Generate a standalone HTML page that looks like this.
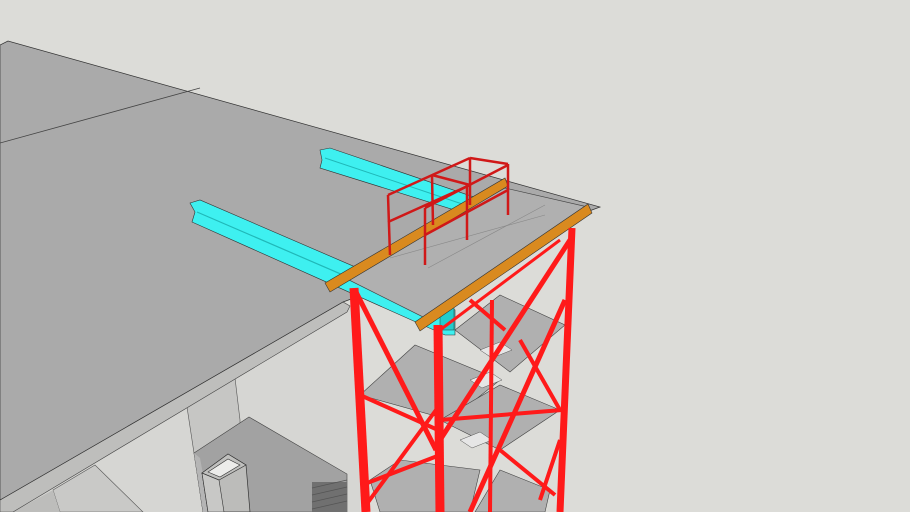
<!DOCTYPE html>
<html><head><meta charset="utf-8"><style>
html,body{margin:0;padding:0;background:#dcdcd8;}
svg{display:block}
</style></head><body>
<svg width="910" height="512" viewBox="0 0 910 512" xmlns="http://www.w3.org/2000/svg">
<rect width="910" height="512" fill="#dcdcd8"/>
<!-- under-slab area -->
<polygon points="347,310 13,512 360,512 360,300" fill="#d6d6d3"/>
<polygon points="53,490 95,465 143,512 60,512" fill="#c9c9c7" stroke="#555" stroke-width="0.6"/>
<polygon points="13,512 53,490 60,512" fill="#bdbdbb"/>
<!-- column -->
<polygon points="187,407 235,378 240,420 240,512 203,512" fill="#c6c6c4" stroke="#555" stroke-width="0.6"/>
<!-- AC box -->
<polygon points="194,453 249,417 347,474 347,512 203,512" fill="#a2a2a2" stroke="#444" stroke-width="0.6"/>
<polygon points="194,453 203,512 210,512 200,458" fill="#b5b5b5"/>
<rect x="312" y="482" width="35" height="30" fill="#707070"/>
<g stroke="#555" stroke-width="0.8"><line x1="312" y1="488" x2="347" y2="480"/><line x1="312" y1="495" x2="347" y2="487"/><line x1="312" y1="502" x2="347" y2="494"/><line x1="312" y1="509" x2="347" y2="501"/></g>
<!-- chimney -->
<polygon points="202,473 228,454 246,465 250,512 208,512" fill="#bcbcba" stroke="#333" stroke-width="0.7"/>
<polygon points="202,473 219,480 224,512 208,512" fill="#c8c8c6" stroke="#333" stroke-width="0.6"/>
<polygon points="202,473 228,454 246,465 219,480" fill="#c0c0be" stroke="#333" stroke-width="0.7"/>
<polygon points="208,472 228,459 240,465 220,477" fill="#ececea" stroke="#333" stroke-width="0.6"/>
<!-- slab -->
<polygon points="0,500 343,302 350,306 347,312 13,512 0,512" fill="#bebebc" stroke="#444" stroke-width="0.6"/>
<polygon points="0,45 8,41 600,207 343,302 0,500" fill="#aaaaaa" stroke="#333" stroke-width="0.7"/>
<line x1="0" y1="143" x2="200" y2="88" stroke="#444" stroke-width="0.8"/>
<!-- cyan beams -->
<polygon points="320,150 330,148 512,210 512,228 320,168 322,160" fill="#3ef0f0" stroke="#333" stroke-width="0.6"/>
<line x1="325" y1="158" x2="510" y2="220" stroke="#20b8b8" stroke-width="1"/>
<polygon points="190,203 200,200 455,310 455,335 445,335 192,222 195,212" fill="#3ef0f0" stroke="#333" stroke-width="0.6"/>
<line x1="197" y1="212" x2="452" y2="322" stroke="#20b8b8" stroke-width="1.2"/>
<rect x="440" y="305" width="14" height="25" fill="#22cccc" stroke="#333" stroke-width="0.5"/>
<!-- platform top -->
<polygon points="345,278 505,188 588,207 425,318" fill="#b0b0b0" stroke="#444" stroke-width="0.7"/>
<line x1="390" y1="258" x2="545" y2="215" stroke="#888" stroke-width="0.6"/>
<line x1="428" y1="268" x2="545" y2="205" stroke="#888" stroke-width="0.6"/>
<!-- orange beams -->
<polygon points="325,283 505,178 508,186 330,292" fill="#d98a1f" stroke="#333" stroke-width="0.6"/>
<polygon points="415,322 588,204 592,213 420,331" fill="#d98a1f" stroke="#333" stroke-width="0.6"/>
<!-- lower platforms -->
<polygon points="455,330 500,295 565,325 510,372" fill="#b0b0b0" stroke="#444" stroke-width="0.6"/>
<polygon points="360,395 415,345 500,380 450,420" fill="#b0b0b0" stroke="#444" stroke-width="0.6"/>
<polygon points="440,420 500,385 560,410 500,450" fill="#b0b0b0" stroke="#444" stroke-width="0.6"/>
<polygon points="370,480 400,460 480,470 470,512 380,512" fill="#b0b0b0" stroke="#444" stroke-width="0.6"/>
<polygon points="475,512 500,470 550,490 545,512" fill="#b0b0b0" stroke="#444" stroke-width="0.6"/>
<g fill="#e6e6e6" stroke="#555" stroke-width="0.5">
<polygon points="480,350 500,342 512,350 492,358"/>
<polygon points="470,380 490,372 502,380 482,388"/>
<polygon points="460,440 480,432 492,440 472,448"/>
</g>
<!-- red tower -->
<g stroke="#ff1a1a" stroke-linecap="butt" fill="none">
<line x1="354" y1="288" x2="366" y2="512" stroke-width="9"/>
<line x1="438" y1="325" x2="440" y2="512" stroke-width="9"/>
<line x1="572" y1="228" x2="560" y2="512" stroke-width="7"/>
<line x1="492" y1="300" x2="490" y2="512" stroke-width="4"/>
<line x1="356" y1="292" x2="436" y2="450" stroke-width="5"/>
<line x1="366" y1="505" x2="436" y2="410" stroke-width="4"/>
<line x1="440" y1="440" x2="570" y2="240" stroke-width="5"/>
<line x1="440" y1="330" x2="560" y2="240" stroke-width="3"/>
<line x1="470" y1="512" x2="565" y2="300" stroke-width="5"/>
<line x1="360" y1="395" x2="438" y2="430" stroke-width="4"/>
<line x1="440" y1="420" x2="562" y2="410" stroke-width="4"/>
<line x1="362" y1="485" x2="440" y2="455" stroke-width="4"/>
<line x1="520" y1="340" x2="560" y2="410" stroke-width="4"/>
<line x1="540" y1="500" x2="560" y2="440" stroke-width="4"/>
<line x1="470" y1="300" x2="505" y2="330" stroke-width="4"/>
<line x1="500" y1="450" x2="555" y2="495" stroke-width="4"/>
</g>
<!-- railing -->
<g stroke="#d01818" stroke-width="2.5" fill="none">
<line x1="388" y1="195" x2="390" y2="255"/>
<line x1="432" y1="175" x2="433" y2="225"/>
<line x1="470" y1="158" x2="470" y2="205"/>
<line x1="508" y1="164" x2="508" y2="215"/>
<line x1="425" y1="208" x2="425" y2="265"/>
<line x1="467" y1="185" x2="467" y2="240"/>
<line x1="388" y1="195" x2="470" y2="158"/>
<line x1="388" y1="222" x2="470" y2="185"/>
<line x1="470" y1="158" x2="508" y2="164"/>
<line x1="425" y1="208" x2="508" y2="165"/>
<line x1="425" y1="235" x2="508" y2="190"/>
<line x1="432" y1="175" x2="470" y2="185"/>
</g>
</svg>
</body></html>
